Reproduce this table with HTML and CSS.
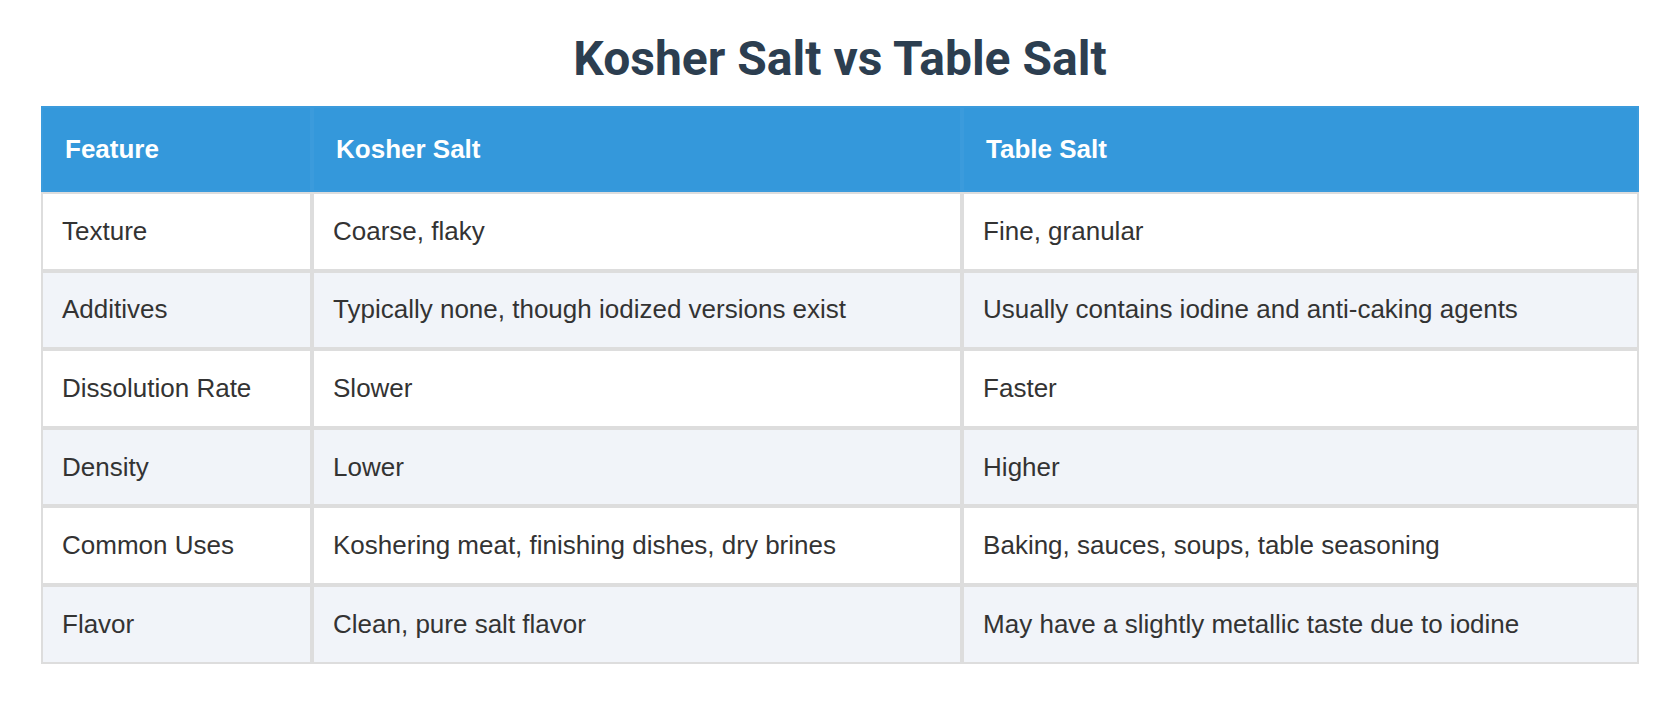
FILE: index.html
```html
<!DOCTYPE html>
<html lang="en">
<head>
<meta charset="utf-8">
<title>Kosher Salt vs Table Salt</title>
<link rel="stylesheet" href="styles.css">
</head>
<body>
<main class="page">
  <h1 class="title">Kosher Salt vs Table Salt</h1>
  <table class="compare">
    <colgroup>
      <col class="col-feature">
      <col class="col-kosher">
      <col class="col-table">
    </colgroup>
    <thead>
      <tr>
        <th>Feature</th>
        <th>Kosher Salt</th>
        <th>Table Salt</th>
      </tr>
    </thead>
    <tbody>
      <tr>
        <td>Texture</td>
        <td>Coarse, flaky</td>
        <td>Fine, granular</td>
      </tr>
      <tr>
        <td>Additives</td>
        <td>Typically none, though iodized versions exist</td>
        <td>Usually contains iodine and anti-caking agents</td>
      </tr>
      <tr>
        <td>Dissolution Rate</td>
        <td>Slower</td>
        <td>Faster</td>
      </tr>
      <tr>
        <td>Density</td>
        <td>Lower</td>
        <td>Higher</td>
      </tr>
      <tr>
        <td>Common Uses</td>
        <td>Koshering meat, finishing dishes, dry brines</td>
        <td>Baking, sauces, soups, table seasoning</td>
      </tr>
      <tr>
        <td>Flavor</td>
        <td>Clean, pure salt flavor</td>
        <td>May have a slightly metallic taste due to iodine</td>
      </tr>
    </tbody>
  </table>
</main>
</body>
</html>
```

FILE: styles.css
```css
html, body {
  margin: 0;
  padding: 0;
  background: #ffffff;
}

.page {
  padding: 30px 41px 0;
  font-family: "Liberation Sans", Arial, sans-serif;
  color: #333333;
}

.title {
  margin: 0 0 19px;
  font-family: Roboto, "Liberation Sans", sans-serif;
  font-weight: 700;
  font-size: 48px;
  line-height: normal;
  text-align: center;
  color: #2c3e50;
}

.compare {
  width: 100%;
  table-layout: fixed;
  border-collapse: separate;
  border-spacing: 0;
  font-size: 26px;
  line-height: 1.5;
}

.col-feature { width: 16.96%; }
.col-kosher { width: 40.68%; }
.col-table { width: 42.36%; }

.compare th {
  background: #3498db;
  color: #ffffff;
  font-weight: 700;
  text-align: left;
  padding: 21.5px 22px;
  border: 2px solid #3b9bdc;
}

.compare td {
  padding: 17.8px 19px;
  border: 2px solid #dddddd;
  text-align: left;
  white-space: nowrap;
}

.compare tbody tr:nth-child(even) td {
  background: #f1f4f9;
}
```
